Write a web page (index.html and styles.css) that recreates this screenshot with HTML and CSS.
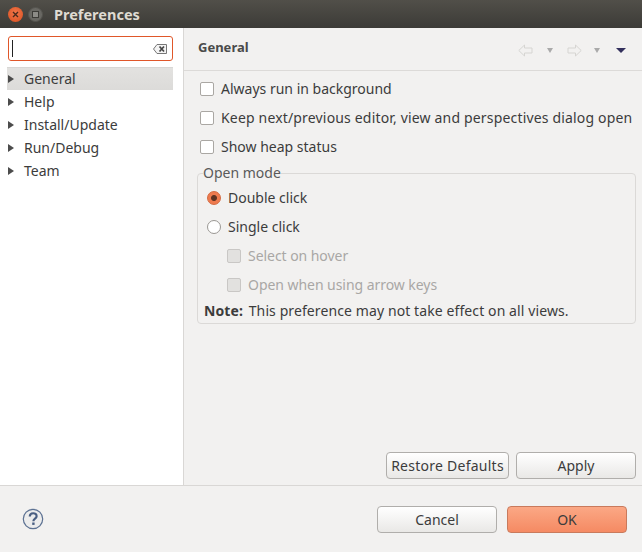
FILE: index.html
```html
<!DOCTYPE html>
<html lang="en">
<head>
<meta charset="utf-8">
<title>Preferences</title>
<link rel="stylesheet" href="styles.css">
</head>
<body>
<div class="window">
  <header class="titlebar">
    <span class="wbtn close"><svg width="7" height="7" viewBox="0 0 7 7"><path d="M1 1l5 5M6 1L1 6" stroke="#4a2a1c" stroke-width="1.4"/></svg></span>
    <span class="wbtn max"><span class="maxbox"></span></span>
    <span class="title">Preferences</span>
  </header>
  <div class="main">
    <aside class="side">
      <div class="search">
        <span class="caret"></span>
        <svg class="clear" width="14" height="10" viewBox="0 0 14 10"><path d="M4 .5h9.500v9H4L.5 5z" fill="#f4f4f4" stroke="#777"/><path d="M6.500 2.500l4.500 5M11 2.500l-4.500 5" stroke="#444" stroke-width="1.700"/></svg>
      </div>
      <ul class="tree">
        <li class="selected"><span class="arrow"></span>General</li>
        <li><span class="arrow"></span>Help</li>
        <li><span class="arrow"></span>Install/Update</li>
        <li><span class="arrow"></span>Run/Debug</li>
        <li><span class="arrow"></span>Team</li>
      </ul>
    </aside>
    <section class="content">
      <div class="head">
        <h1>General</h1>
        <div class="nav">
          <svg class="nav-arrow back" width="15" height="13" viewBox="0 0 15 13"><path d="M.8 6.500L6.500 1v3h7.500v5H6.500v3z" fill="none" stroke="#d6d5d2"/></svg>
          <span class="drop first"></span>
          <svg class="nav-arrow fwd" width="15" height="13" viewBox="0 0 15 13"><path d="M14.200 6.500L8.500 1v3H1v5h7.500v3z" fill="none" stroke="#d6d5d2"/></svg>
          <span class="drop"></span>
          <span class="drop menu"></span>
        </div>
      </div>
      <div class="opts">
        <label class="row"><span class="check"></span>Always run in background</label>
        <label class="row wide"><span class="check"></span>Keep next/previous editor, view and perspectives dialog open</label>
        <label class="row"><span class="check"></span>Show heap status</label>
      </div>
      <fieldset class="group">
        <legend>Open mode</legend>
        <label class="row"><span class="radio on"></span>Double click</label>
        <label class="row"><span class="radio"></span>Single click</label>
        <label class="row sub off"><span class="check"></span>Select on hover</label>
        <label class="row sub off"><span class="check"></span>Open when using arrow keys</label>
        <p class="note"><b class="note-label">Note:</b> This preference may not take effect on all views.</p>
      </fieldset>
      <div class="actions">
        <button class="btn restore">Restore Defaults</button>
        <button class="btn apply">Apply</button>
      </div>
    </section>
  </div>
  <footer class="foot">
    <svg class="help" width="22" height="22" viewBox="0 0 22 22"><circle cx="11" cy="11" r="9.700" fill="#ececec" stroke="#5c7192" stroke-width="1.200"/><path d="M7.800 8.500c0-4.300 6.800-4.300 6.800-.3 0 2.500-3.200 2.500-3.200 5" fill="none" stroke="#4a5f82" stroke-width="2.200"/><rect x="10.200" y="14.500" width="2.400" height="2.400" fill="#4a5f82"/></svg>
    <div class="foot-btns">
      <button class="btn cancel">Cancel</button>
      <button class="btn ok">OK</button>
    </div>
  </footer>
</div>
</body>
</html>
```
FILE: styles.css
```css
* { box-sizing: border-box; }
html, body { margin: 0; padding: 0; }
body { width: 642px; height: 552px; overflow: hidden; font-family: "Noto Sans", "Open Sans", sans-serif; font-size: 14px; color: #3c3c3c; background: #f2f1f0; }
.window { display: flex; flex-direction: column; width: 642px; height: 552px; }
.titlebar { height: 28px; flex: none; display: flex; align-items: center; padding-left: 8px; background: linear-gradient(#514f49, #3c3b37); }
.wbtn { width: 15px; height: 15px; border-radius: 50%; display: flex; align-items: center; justify-content: center; margin-right: 5px; }
.close { background: radial-gradient(circle at 50% 40%, #f2774a, #d84e1f); }
.max { background: #696863; border: 1px solid #55544f; }
.maxbox { width: 7px; height: 7px; border: 1px solid #3c3b37; background: #8c8b86; }
.title { margin-left: 6px; font-weight: 700; font-size: 14.5px; color: #dfdbd2; }
.main { flex: 1; display: flex; min-height: 0; }
.side { width: 184px; flex: none; background: #fff; border-right: 1px solid #d9d7d5; padding: 8px 10px 0 7px; }
.search { height: 25px; margin-left: 1px; border: 1px solid #e0572a; border-radius: 3px; background: #fff; display: flex; align-items: center; justify-content: space-between; padding: 0 5px 0 3px; }
.caret { width: 1px; height: 17px; background: #222; }
.clear { flex: none; }
.tree { list-style: none; margin: 6px 0 0; padding: 0; }
.tree li { height: 23px; line-height: 23px; display: flex; align-items: center; color: #3c3c3c; }
.tree .selected { background: linear-gradient(#e3e2e0, #dcdbd9); box-shadow: inset 0 1px #d8d7d5; }
.arrow { width: 0; height: 0; border-left: 6px solid #4c4c4c; border-top: 4px solid transparent; border-bottom: 4px solid transparent; margin: 0 10px 0 1px; }
.content { flex: 1; min-width: 0; display: flex; flex-direction: column; padding: 0 6px 0 13px; }
.head { height: 43px; margin: 0 -6px 0 -13px; padding: 0 16px 0 14px; border-bottom: 1px solid #dcdad8; display: flex; align-items: flex-start; justify-content: space-between; }
h1 { margin: 10px 0 0; font-size: 13px; line-height: 18px; font-weight: 700; color: #4a4a4a; }
.nav { display: flex; align-items: center; margin-top: 16px; }
.drop { width: 0; height: 0; border-top: 5px solid #aaa; border-left: 3.5px solid transparent; border-right: 3.5px solid transparent; margin: 0 0 0 12px; }
.drop.first { margin-left: 14px; }
.nav-arrow.fwd { margin-left: 14px; }
.drop.menu { border-top: 5px solid #33305c; border-left-width: 5px; border-right-width: 5px; margin-left: 16px; }
.opts { padding-top: 3px; }
.row { display: flex; align-items: center; height: 29px; color: #3c3c3c; white-space: nowrap; }
.opts .row { padding-left: 3px; }
.wide { letter-spacing: .17px; }
.check { width: 14px; height: 14px; border: 1px solid #aaa7a3; border-radius: 2px; background: #fff; margin-right: 7px; flex: none; }
.group { margin: 4px 0 0; padding: 2px 0 0 9px; height: 159px; border: 1px solid #dbd9d7; border-radius: 4px; }
.group legend { padding: 0; margin-left: -4px; line-height: 16px; color: #5a5a5a; }
.radio { width: 14px; height: 14px; border-radius: 50%; border: 1px solid #9a9793; background: #fff; margin-right: 7px; flex: none; }
.radio.on { background: radial-gradient(circle, #5e3322 0 2.500px, #ee7a4e 3.500px); border-color: #d4693f; }
.sub { padding-left: 20px; letter-spacing: -.05px; }
.off { color: #a9a7a5; }
.off .check { background: #e2e1df; border-color: #c9c7c5; }
.note { margin: 2px 0 0 -3px; line-height: 20px; white-space: nowrap; letter-spacing: .1px; }
.note-label { margin-right: 2px; }
.actions { margin-top: auto; display: flex; justify-content: flex-end; gap: 7px; padding-bottom: 6px; }
.btn { height: 27px; border: 1px solid #b0aeab; border-radius: 4px; background: linear-gradient(#fff, #e9e8e6); font: inherit; color: #3c3c3c; padding: 0; }
.restore { width: 123px; letter-spacing: .25px; }
.apply { width: 120px; }
.foot { height: 67px; flex: none; border-top: 1px solid #d9d7d5; display: flex; align-items: center; justify-content: space-between; padding: 0 15px 0 22px; }
.foot-btns { display: flex; gap: 10px; }
.cancel, .ok { width: 120px; }
.ok { background: linear-gradient(#fba885, #f58a63); border-color: #c97a5c; }
```
